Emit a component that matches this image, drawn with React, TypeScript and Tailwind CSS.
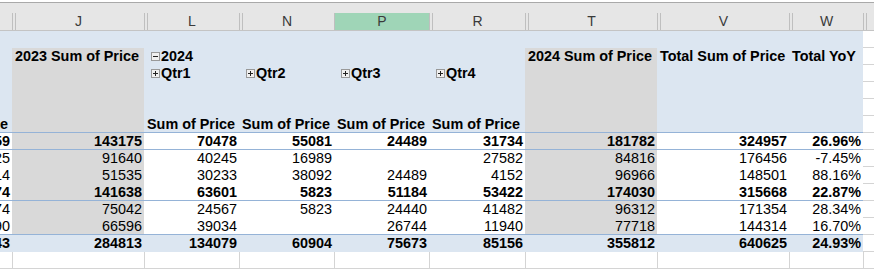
import React from 'react';

// column widths (px): partial col, J, L, N, P, R, T, V, W -> 863, rest fills to 874
const colW = ['w-[12px]', 'w-[132px]', 'w-[95px]', 'w-[95px]', 'w-[95px]', 'w-[96px]', 'w-[132px]', 'w-[132px]', 'w-[74px]'];
const letters = ['', 'J', 'L', 'N', 'P', 'R', 'T', 'V', 'W'];

type RowKind = 'pivot' | 'data' | 'total';

function Toggle({ open }: { open?: boolean }) {
  return (
    <svg width="9" height="9" viewBox="0 0 9 9" className="mr-[1px] shrink-0">
      <rect x="0.5" y="0.5" width="8" height="8" fill="#f0f0f0" stroke="#999999" />
      <path d="M2 4.5h5" stroke="#222222" />
      {!open && <path d="M4.5 2v5" stroke="#222222" />}
    </svg>
  );
}

function Label({ text, open }: { text: string; open?: boolean }) {
  return (
    <span className="ml-[4px] inline-flex items-center">
      <Toggle open={open} />
      {text}
    </span>
  );
}

function ColumnHeader() {
  return (
    <div className="h-[31px] bg-white pt-[2px]">
      <div className="h-[29px] border-y border-t-[#a9a9a9] border-b-[#c4c4c4] bg-[#e6e6e6] pt-[10px]">
        <div className="flex h-[17px] text-[14px] text-[#3a3a3a]">
          {colW.map((w, i) => (
            <div
              key={i}
              className={`${w} flex shrink-0 items-center justify-center ${
                i === 0 ? '' : 'border-l border-[#bfbfbf]'
              } ${
                i === 4
                  ? 'bg-[#9fd5b7]'
                  : i === 0
                  ? ''
                  : 'shadow-[inset_2px_0_0_#e6e6e6,inset_3px_0_0_#bfbfbf]'
              }`}
            >
              {letters[i]}
            </div>
          ))}
          <div className="flex-1 border-l border-[#bfbfbf] shadow-[inset_2px_0_0_#e6e6e6,inset_3px_0_0_#bfbfbf]" />
        </div>
      </div>
    </div>
  );
}

function Row({
  cells = [],
  kind,
  shade = true,
  line = false,
  bold = false,
}: {
  cells?: React.ReactNode[];
  kind: RowKind;
  shade?: boolean;
  line?: boolean;
  bold?: boolean;
}) {
  return (
    <div className={`flex h-[17px] ${bold ? 'font-bold' : ''}`}>
      {colW.map((w, i) => {
        let bg = kind === 'data' ? 'bg-white' : 'bg-[#dce6f1]';
        if (shade && kind !== 'total' && (i === 1 || i === 6)) bg = 'bg-[#d9d9d9]';
        const right = kind !== 'pivot' || i === 0;
        const pad = !right ? 'pl-[3px]' : kind === 'pivot' ? 'justify-end pr-[4px]' : 'justify-end pr-[2px]';
        return (
          <div
            key={i}
            className={`${w} ${bg} ${pad} flex shrink-0 items-center overflow-hidden whitespace-nowrap border-b leading-[16px] ${
              line ? 'border-[#95b3d7]' : 'border-transparent'
            }`}
          >
            <span className="shrink-0">{cells[i]}</span>
          </div>
        );
      })}
      <div className="flex-1 border-b border-[#d4d4d4] bg-white" />
    </div>
  );
}

function BlankRow() {
  return (
    <div className="flex h-[17px]">
      {colW.map((w, i) => (
        <div key={i} className={`${w} shrink-0 border-b border-[#d4d4d4] ${i === 0 ? '' : 'border-l'}`} />
      ))}
      <div className="flex-1 border-b border-l border-[#d4d4d4]" />
    </div>
  );
}

const dataRows = [
  { bold: true, line: true, v: ['118959', '143175', '70478', '55081', '24489', '31734', '181782', '324957', '26.96%'] },
  { v: ['84825', '91640', '40245', '16989', '', '27582', '84816', '176456', '-7.45%'] },
  { v: ['34314', '51535', '30233', '38092', '24489', '4152', '96966', '148501', '88.16%'] },
  { bold: true, line: true, v: ['109174', '141638', '63601', '5823', '51184', '53422', '174030', '315668', '22.87%'] },
  { v: ['58474', '75042', '24567', '5823', '24440', '41482', '96312', '171354', '28.34%'] },
  { line: true, v: ['50790', '66596', '39034', '', '26744', '11940', '77718', '144314', '16.70%'] },
];

export default function App() {
  return (
    <div className="h-[269px] w-[874px] overflow-hidden bg-white font-['Liberation_Sans',Arial,sans-serif] text-[14.4px] text-black">
      <ColumnHeader />

      {/* pivot header block */}
      <Row kind="pivot" shade={false} />
      <Row
        kind="pivot"
        bold
        cells={[
          '',
          '2023 Sum of Price',
          <Label key="y" text="2024" open />,
          '',
          '',
          '',
          '2024 Sum of Price',
          'Total Sum of Price',
          'Total YoY',
        ]}
      />
      <Row
        kind="pivot"
        bold
        cells={[
          '',
          '',
          <Label key="q1" text="Qtr1" />,
          <Label key="q2" text="Qtr2" />,
          <Label key="q3" text="Qtr3" />,
          <Label key="q4" text="Qtr4" />,
        ]}
      />
      <Row kind="pivot" />
      <Row kind="pivot" />
      <Row
        kind="pivot"
        bold
        line
        cells={['Sum of Price', '', 'Sum of Price', 'Sum of Price', 'Sum of Price', 'Sum of Price']}
      />

      {dataRows.map((r, idx) => (
        <Row key={idx} kind="data" bold={r.bold} line={r.line} cells={r.v} />
      ))}

      <Row
        kind="total"
        bold
        cells={['220043', '284813', '134079', '60904', '75673', '85156', '355812', '640625', '24.93%']}
      />
      <BlankRow />
    </div>
  );
}
